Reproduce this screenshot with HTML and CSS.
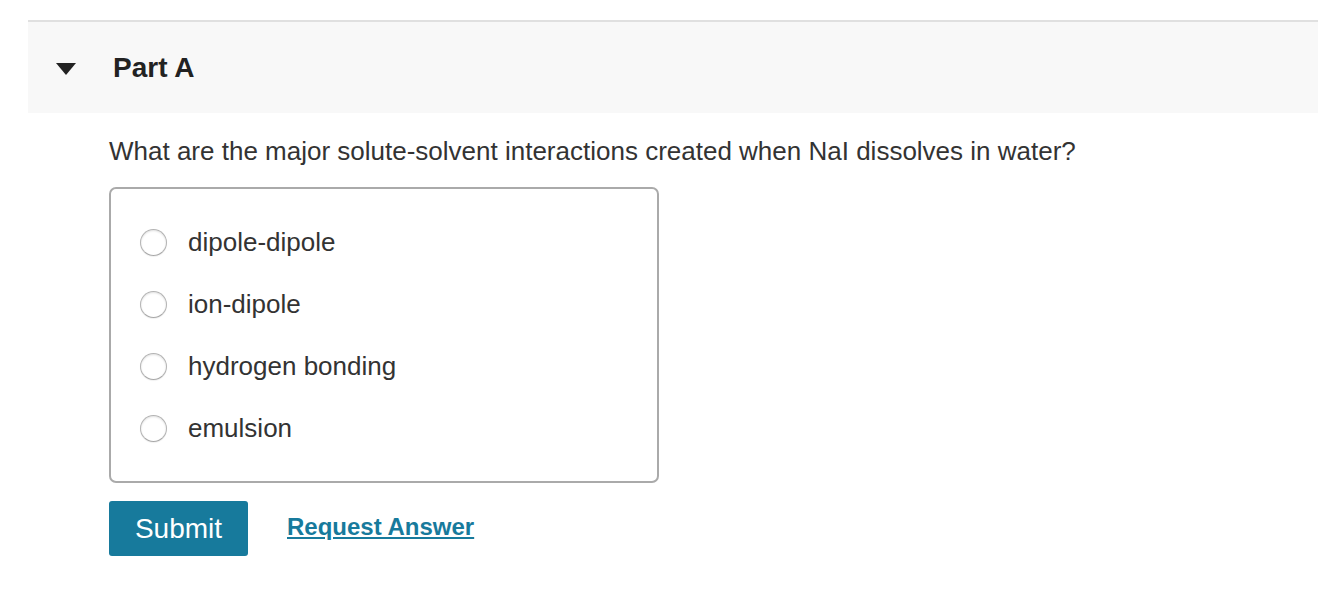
FILE: index.html
```html
<!DOCTYPE html>
<html lang="en">
<head>
<meta charset="utf-8">
<title>Part A</title>
<link rel="stylesheet" href="styles.css">
</head>
<body>
<section class="part">
  <header class="part-header">
    <span class="caret" aria-hidden="true"></span>
    <h2 class="part-title">Part A</h2>
  </header>
  <div class="part-body">
    <p class="question">What are the major solute-solvent interactions created when NaI dissolves in water?</p>
    <div class="choices">
      <label class="choice"><span class="radio"></span><span class="choice-text">dipole-dipole</span></label>
      <label class="choice"><span class="radio"></span><span class="choice-text">ion-dipole</span></label>
      <label class="choice"><span class="radio"></span><span class="choice-text">hydrogen bonding</span></label>
      <label class="choice"><span class="radio"></span><span class="choice-text">emulsion</span></label>
    </div>
    <div class="actions">
      <button class="submit" type="button">Submit</button>
      <a class="request" href="#">Request Answer</a>
    </div>
  </div>
</section>
</body>
</html>
```
FILE: styles.css
```css
* { box-sizing: border-box; }
html, body { margin: 0; padding: 0; background: #fff; }
body {
  font-family: "Liberation Sans", Arial, Helvetica, sans-serif;
  color: #333;
  padding: 20px 0 0 28px;
}
.part-header {
  display: flex;
  align-items: center;
  height: 93px;
  background: #f8f8f8;
  border-top: 2px solid #e0e0e0;
  padding-left: 28px;
}
.caret {
  width: 0;
  height: 0;
  border-left: 10px solid transparent;
  border-right: 10px solid transparent;
  border-top: 12px solid #222;
  margin-top: 2px;
}
.part-title {
  margin: 0 0 0 37px;
  font-size: 28px;
  font-weight: bold;
  color: #222;
}
.part-body {
  padding-left: 81px;
}
.question {
  margin: 22px 0 0;
  font-size: 26px;
  line-height: 32px;
  color: #333;
}
.choices {
  width: 550px;
  margin-top: 20px;
  border: 2px solid #aaa;
  border-radius: 7px;
  padding: 40px 0 39px 29px;
  display: flex;
  flex-direction: column;
  gap: 35px;
}
.choice {
  display: flex;
  align-items: center;
  height: 27px;
}
.radio {
  width: 27px;
  height: 27px;
  border-radius: 50%;
  border: 1px solid #b4b4b4;
  border-bottom-color: #a8a8a8;
  background: #fff;
  box-shadow: inset 0 1px 2px rgba(0,0,0,0.12), 0 1px 1px rgba(0,0,0,0.06);
  flex: none;
}
.choice-text {
  margin-left: 21px;
  font-size: 26px;
  color: #333;
}
.actions {
  display: flex;
  align-items: center;
  margin-top: 18px;
}
.submit {
  width: 139px;
  height: 55px;
  background: #177a9c;
  color: #fff;
  border: none;
  border-radius: 3px;
  font-family: inherit;
  font-size: 28px;
  padding: 0;
}
.request {
  margin-left: 39px;
  font-size: 24px;
  font-weight: bold;
  color: #177a9c;
  text-decoration: underline;
  margin-top: -4px;
}
```
